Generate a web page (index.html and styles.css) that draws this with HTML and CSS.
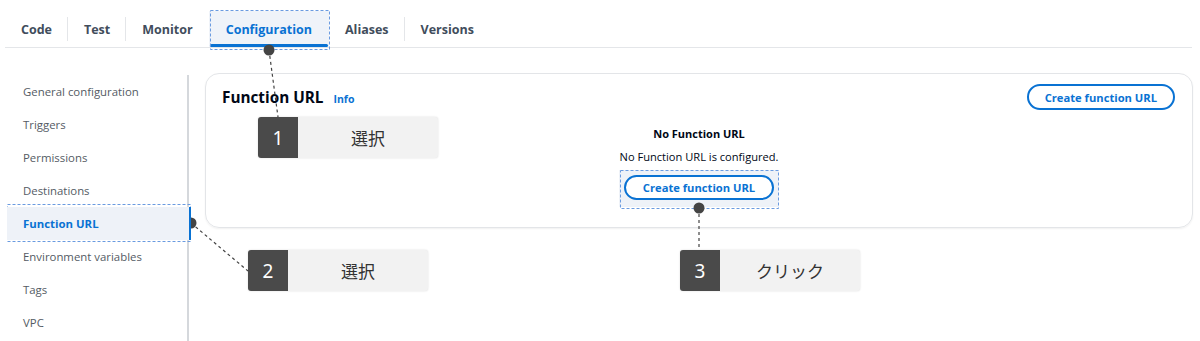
FILE: index.html
```html
<!DOCTYPE html>
<html lang="en">
<head>
    <meta charset="UTF-8">
    <title>Lambda - Function URL</title>
    <link rel="stylesheet" href="styles.css">
</head>
<body>
    <div class="page">
        <nav class="tabs">
            <a class="tab">Code</a>
            <a class="tab">Test</a>
            <a class="tab">Monitor</a>
            <a class="tab active">Configuration</a>
            <a class="tab after-active">Aliases</a>
            <a class="tab">Versions</a>
        </nav>

        <div class="layout">
            <aside class="sidenav">
                <a class="nav-item">General configuration</a>
                <a class="nav-item">Triggers</a>
                <a class="nav-item">Permissions</a>
                <a class="nav-item">Destinations</a>
                <a class="nav-item selected">Function URL</a>
                <a class="nav-item">Environment variables</a>
                <a class="nav-item">Tags</a>
                <a class="nav-item">VPC</a>
            </aside>

            <main class="content">
                <section class="card">
                    <header class="card-head">
                        <h2 class="card-title">Function URL <span class="info">Info</span></h2>
                        <button class="btn">Create function URL</button>
                    </header>
                    <div class="empty">
                        <div class="empty-title">No Function URL</div>
                        <div class="empty-text">No Function URL is configured.</div>
                        <div class="btn-wrap">
                            <button class="btn">Create function URL</button>
                        </div>
                    </div>
                </section>
            </main>
        </div>

        <!-- annotation layer -->
        <svg class="marks" width="1200" height="341" viewBox="0 0 1200 341">
            <rect class="mark-box" x="210.5" y="10.5" width="119" height="39" />
            <rect class="mark-box" x="7.5" y="204.5" width="183" height="37" />
            <rect class="mark-box" x="620.5" y="170.5" width="158" height="38" />
            <line class="mark-line" x1="269" y1="50" x2="278" y2="117" />
            <line class="mark-line" x1="191" y1="223" x2="248" y2="271" />
            <line class="mark-line" x1="699" y1="208" x2="699" y2="250" />
            <circle class="mark-dot" cx="269" cy="50" r="5.5" />
            <circle class="mark-dot" cx="191" cy="223" r="5.5" />
            <circle class="mark-dot" cx="699" cy="208" r="5.5" />
        </svg>

        <div class="callout step1"><span class="num">1</span><span class="label">選択</span></div>
        <div class="callout step2"><span class="num">2</span><span class="label">選択</span></div>
        <div class="callout step3"><span class="num">3</span><span class="label">クリック</span></div>
    </div>
</body>
</html>
```

FILE: styles.css
```css
body {
    margin: 0;
    padding: 0;
    background: #fff;
    font-family: 'Open Sans', 'Noto Sans', sans-serif;
    color: #414d5c;
    overflow: hidden;
}
.page {
    width: 1200px;
    height: 341px;
    position: relative;
}

/* tabs */
.tabs {
    display: flex;
    margin: 0 8px 0 5px;
    padding-top: 12px;
    height: 35px;
    border-bottom: 1px solid #e4e6e9;
}
.tab {
    position: relative;
    display: flex;
    align-items: center;
    padding: 0 16px;
    font-size: 12.5px;
    font-weight: 700;
    color: #414d5c;
}
.tab + .tab::before {
    content: '';
    position: absolute;
    left: -1px;
    top: 5px;
    bottom: 6px;
    border-left: 1px solid #e4e6e9;
}
.tab.active::before,
.tab.after-active::before {
    display: none;
}
.tab.active {
    color: #0972d3;
    background: #eff3f9;
    padding: 0 17px;
    margin-top: -1px;
}
.tab.active::after {
    content: '';
    position: absolute;
    left: 1px;
    right: 1px;
    bottom: 0;
    height: 3px;
    border-radius: 2px;
    background: #0972d3;
}

/* layout */
.layout {
    display: flex;
}
.sidenav {
    width: 180px;
    margin-top: 27px;
    padding-left: 7px;
    height: 266px;
    border-right: 2px solid #d5d8dc;
    display: flex;
    flex-direction: column;
}
.nav-item {
    display: flex;
    align-items: center;
    height: 33px;
    padding-left: 16px;
    font-size: 11.4px;
    color: #545b64;
}
.nav-item.selected {
    font-weight: 700;
    color: #0972d3;
    background: #eef2f8;
    box-shadow: 2px 0 0 #0972d3;
    margin-right: -2px;
    padding-right: 2px;
    position: relative;
    z-index: 1;
}

.content {
    flex: 1;
    padding: 25px 7px 0 16px;
}
.card {
    height: 153px;
    border: 1px solid #e3e5e8;
    border-radius: 14px;
    box-shadow: 0 1px 2px rgba(0, 7, 22, 0.06);
}
.card-head {
    display: flex;
    justify-content: space-between;
    align-items: center;
    padding: 10px 17px 0 16px;
}
.card-title {
    margin: 0;
    font-size: 15.3px;
    font-weight: 700;
    color: #000716;
}
.info {
    margin-left: 6px;
    font-size: 10.5px;
    color: #0972d3;
}
.btn {
    height: 26px;
    padding: 0 16px;
    border: 2px solid #0972d3;
    border-radius: 20px;
    background: #fff;
    color: #0972d3;
    font-family: 'Open Sans', 'Noto Sans', sans-serif;
    font-size: 11.2px;
    font-weight: 700;
}

.empty {
    display: flex;
    flex-direction: column;
    align-items: center;
    margin-top: 16px;
}
.empty-title {
    font-size: 11px;
    font-weight: 700;
    color: #000716;
}
.empty-text {
    margin-top: 8px;
    font-size: 11.1px;
    color: #000716;
}
.btn-wrap {
    margin-top: 6px;
    padding: 5px 5px 7px;
    background: #eef2f8;
}
.btn-wrap .btn {
    height: 25px;
    padding: 0 17px;
}

/* annotations */
.marks {
    position: absolute;
    top: 0;
    left: 0;
    pointer-events: none;
}
.mark-box {
    fill: none;
    stroke: #6a9be0;
    stroke-width: 1;
    stroke-dasharray: 3 2;
}
.mark-line {
    stroke: #444;
    stroke-width: 1.2;
    stroke-dasharray: 3 3;
}
.mark-dot {
    fill: #444;
}

.callout {
    position: absolute;
    display: flex;
    width: 180px;
    height: 41px;
    border-radius: 3px;
    background: #f2f2f2;
    box-shadow: 0 0 2px rgba(0, 0, 0, 0.15);
    overflow: hidden;
}
.callout .num {
    width: 40px;
    display: flex;
    align-items: center;
    justify-content: center;
    background: #4a4a4a;
    color: #fff;
    font-family: 'Noto Sans', sans-serif;
    font-size: 19px;
}
.callout .label {
    flex: 1;
    display: flex;
    align-items: center;
    justify-content: center;
    font-family: 'Noto Sans CJK JP', sans-serif;
    font-size: 17px;
    color: #333;
}
.step1 { left: 258px; top: 117px; }
.step2 { left: 248px; top: 250px; }
.step3 { left: 680px; top: 250px; }
```
